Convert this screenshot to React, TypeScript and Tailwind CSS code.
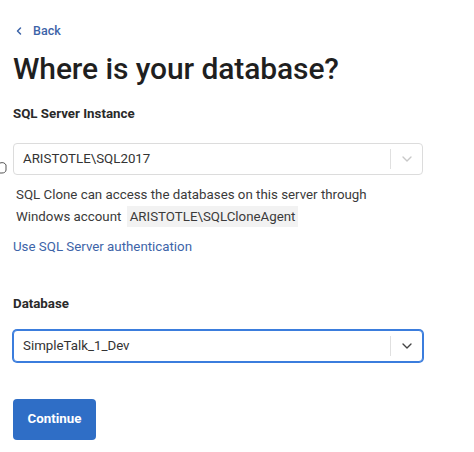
import { ChevronDown, ChevronLeft } from "lucide-react";

function SelectBox({ value, focused }: { value: string; focused?: boolean }) {
  return (
    <div
      className={`flex h-[32px] w-[410px] items-center rounded-[4px] border bg-white ${
        focused ? "border-[#3b7ddd] shadow-[0_0_0_1px_#3b7ddd]" : "border-[#dcdcdc]"
      }`}
    >
      <span className="flex-1 pl-[9px] text-[13.3px] text-[#333]">{value}</span>
      <span className="h-[20px] w-px bg-[#e0e0e0]" />
      <span className="flex w-[31px] items-center justify-center">
        <ChevronDown
          size={16}
          strokeWidth={2}
          className={focused ? "text-[#444]" : "text-[#c8c8c8]"}
        />
      </span>
    </div>
  );
}

export default function App() {
  return (
    <div className="relative min-h-[452px] bg-white pl-[13px] pt-[22px] font-['Roboto',sans-serif] text-[#222]">
      <svg
        className="absolute left-0 top-[160px]"
        width="8"
        height="14"
        viewBox="0 0 8 14"
        fill="none"
        stroke="#555"
        strokeWidth="1"
      >
        <path d="M0 3 C3 2 5 3 6 5 L6 10 C6 12 4 13 2 13 L0 13" />
      </svg>

      <a className="flex items-center gap-[8px] text-[12.5px] font-medium text-[#3d64a8]">
        <ChevronLeft size={12} strokeWidth={3} />
        Back
      </a>

      <h1 className="mt-[10px] text-[30px] font-medium leading-[36px] tracking-[-0.1px] text-[#1f1f1f]">
        Where is your database?
      </h1>

      <div className="mt-[17px] text-[13.3px] font-bold text-[#2a2a2a]">SQL Server Instance</div>

      <div className="mt-[19px]">
        <SelectBox value="ARISTOTLE\SQL2017" />
      </div>

      <p className="mt-[9px] pl-[3px] text-[13.3px] leading-[22px] text-[#3a3a3a]">
        SQL Clone can access the databases on this server through
        <br />
        Windows account{" "}
        <span className="ml-[2px] bg-[#f2f2f2] px-[3px] py-[3px]">ARISTOTLE\SQLCloneAgent</span>
      </p>

      <a className="mt-[9px] block text-[13.3px] text-[#3d64a8]">Use SQL Server authentication</a>

      <div className="mt-[37px] text-[13.3px] font-bold text-[#2a2a2a]">Database</div>

      <div className="mt-[16px]">
        <SelectBox value="SimpleTalk_1_Dev" focused />
      </div>

      <button className="mt-[37px] h-[41px] w-[83px] rounded-[4px] bg-[#2f6ec6] text-[13.3px] font-bold text-white">
        Continue
      </button>
    </div>
  );
}
